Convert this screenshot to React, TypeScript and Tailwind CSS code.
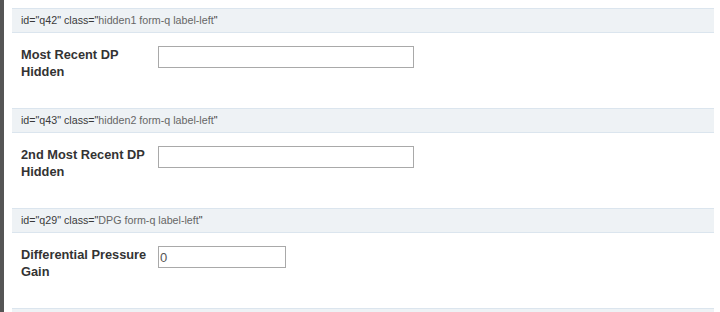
const questions = [
  { id: "q42", cls: "hidden1 form-q label-left", label: "Most Recent DP Hidden", value: "", wide: true },
  { id: "q43", cls: "hidden2 form-q label-left", label: "2nd Most Recent DP Hidden", value: "", wide: true },
  { id: "q29", cls: "DPG form-q label-left", label: "Differential Pressure Gain", value: "0", wide: false },
];

const Question = ({ q }: { q: (typeof questions)[number] }) => {
  return (
    <section>
      <div className="h-[25px] flex items-center border-y border-[#dbe5ee] bg-[#eef2f5] pl-[9px] text-[10.7px] leading-none">
        <span className="text-[#3a3a3a]">id="{q.id}" class="</span>
        <span className="text-[#666]">{q.cls}</span>
        <span className="text-[#3a3a3a]">"</span>
      </div>
      <div className="h-[75px] flex items-start pt-[13px] pl-[9px]">
        <label className="w-[137px] pr-1 text-[12.8px] leading-[17px] font-bold text-[#333]">
          {q.label}
        </label>
        <input
          type="text"
          defaultValue={q.value}
          className={
            (q.wide ? "w-[256px]" : "w-[128px]") +
            " h-[22px] border border-[#a9a9a9] px-[1px] text-[13px] text-[#555] outline-none"
          }
        />
      </div>
    </section>
  );
};

export default function App() {
  return (
    <div
      className="w-[720px] h-[312px] overflow-hidden flex bg-white"
      style={{ fontFamily: '"Liberation Sans", Arial, sans-serif' }}
    >
      <div className="w-[4px] shrink-0 bg-[#555]" />
      <div className="flex-1 pl-[8px] pr-[6px] pt-[8px]">
        {questions.map((q) => (
          <Question key={q.id} q={q} />
        ))}
        <div className="h-[25px] border-t border-[#dbe5ee] bg-[#eef2f5]" />
      </div>
    </div>
  );
}
